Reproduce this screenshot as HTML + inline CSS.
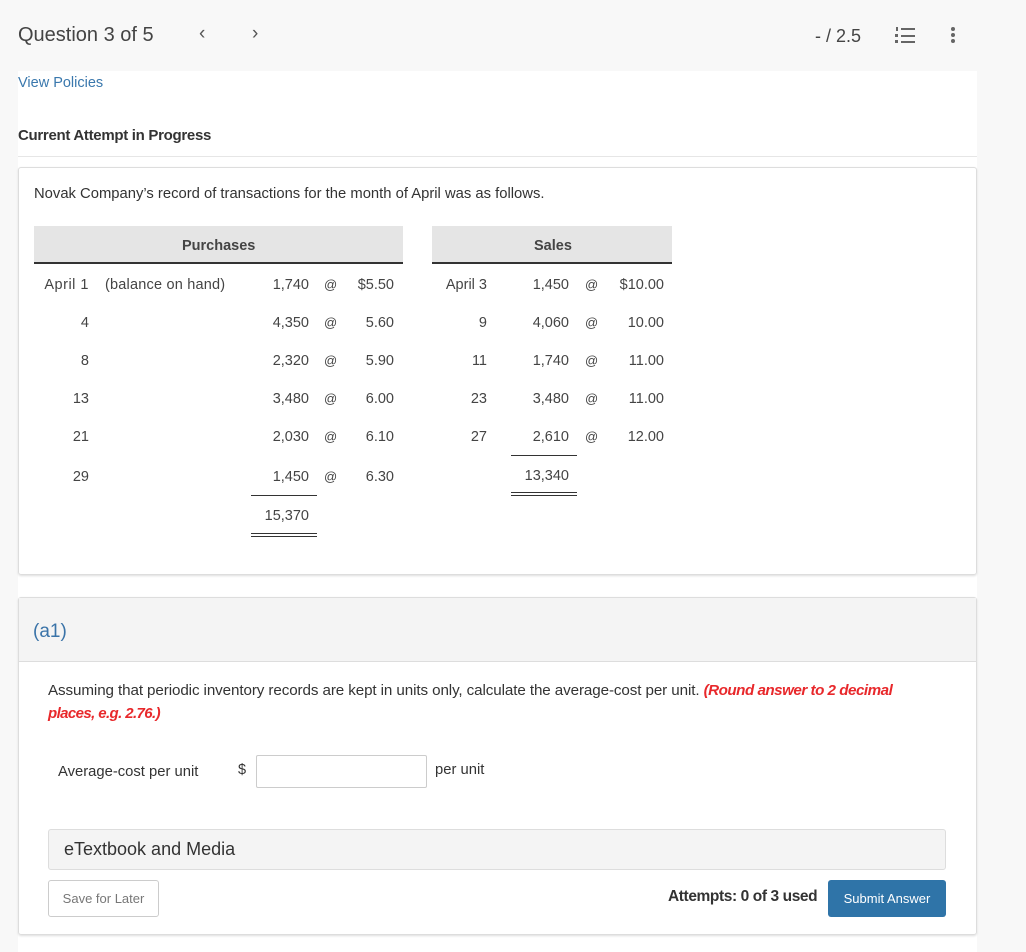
<!DOCTYPE html>
<html><head><meta charset="utf-8"><style>
*{margin:0;padding:0;box-sizing:border-box}
body{width:1026px;height:952px;background:#f8f8f8;font-family:"Liberation Sans",sans-serif;color:#333;position:relative;overflow:hidden}
.a{position:absolute;white-space:nowrap}
.r{position:absolute;white-space:nowrap;text-align:right}
.t{font-size:14.5px;color:#444}
.t>div{margin-top:1px}
</style></head><body>
<div class="a" style="left:18px;top:24px;font-size:20px;color:#444">Question 3 of 5</div>
<div class="a" style="left:199px;top:23px;font-size:19px;color:#555">&#8249;</div>
<div class="a" style="left:252px;top:23px;font-size:19px;color:#555">&#8250;</div>
<div class="a" style="left:815px;top:26px;font-size:18px;color:#444">- / 2.5</div>
<svg class="a" style="left:895px;top:26px" width="22" height="20"><g fill="#666"><rect x="1" y="1" width="2" height="4"/><rect x="0" y="8" width="3" height="3"/><rect x="0" y="14" width="3" height="3"/><rect x="6" y="2" width="14" height="2"/><rect x="6" y="9" width="14" height="2"/><rect x="6" y="15" width="14" height="2"/></g></svg>
<svg class="a" style="left:950px;top:26px" width="6" height="20"><g fill="#666"><circle cx="3" cy="3" r="2"/><circle cx="3" cy="9" r="2"/><circle cx="3" cy="15" r="2"/></g></svg>

<div class="a" style="left:18px;top:71px;width:959px;height:881px;background:#fff"></div>
<div class="a" style="left:18px;top:75px;font-size:14.5px;color:#3a78ad">View Policies</div>
<div class="a" style="left:18px;top:127px;font-size:15px;font-weight:bold;color:#333;letter-spacing:-0.3px">Current Attempt in Progress</div>
<div class="a" style="left:18px;top:156px;width:959px;height:1px;background:#e6e6e6"></div>

<div class="a" style="left:18px;top:167px;width:959px;height:408px;border:1px solid #ddd;border-radius:3px;box-shadow:0 1px 2px #ddd"></div>
<div class="a" style="left:34px;top:186px;font-size:14.8px;color:#333">Novak Company’s record of transactions for the month of April was as follows.</div>

<div class="a" style="left:34px;top:226px;width:369px;height:38px;background:#e5e5e5;border-bottom:2px solid #333"></div>
<div class="a" style="left:432px;top:226px;width:240px;height:38px;background:#e5e5e5;border-bottom:2px solid #333"></div>
<div class="a" style="left:182px;top:238px;font-size:14.5px;font-weight:bold;color:#444">Purchases</div>
<div class="a" style="left:534px;top:238px;font-size:14.5px;font-weight:bold;color:#444">Sales</div>

<div class="t">
<div class="r" style="left:20px;width:69px;top:276px;letter-spacing:0.5px">April 1</div>
<div class="a" style="left:105px;top:276px;letter-spacing:0.2px">(balance on hand)</div>
<div class="r" style="left:20px;width:69px;top:314px">4</div>
<div class="r" style="left:20px;width:69px;top:352px">8</div>
<div class="r" style="left:20px;width:69px;top:390px">13</div>
<div class="r" style="left:20px;width:69px;top:428px">21</div>
<div class="r" style="left:20px;width:69px;top:468px">29</div>

<div class="r" style="left:240px;width:69px;top:276px">1,740</div>
<div class="r" style="left:240px;width:69px;top:314px">4,350</div>
<div class="r" style="left:240px;width:69px;top:352px">2,320</div>
<div class="r" style="left:240px;width:69px;top:390px">3,480</div>
<div class="r" style="left:240px;width:69px;top:428px">2,030</div>
<div class="r" style="left:240px;width:69px;top:468px">1,450</div>
<div class="r" style="left:240px;width:69px;top:507px">15,370</div>

<div class="a" style="left:324px;top:276px;font-size:13px">@</div>
<div class="a" style="left:324px;top:314px;font-size:13px">@</div>
<div class="a" style="left:324px;top:352px;font-size:13px">@</div>
<div class="a" style="left:324px;top:390px;font-size:13px">@</div>
<div class="a" style="left:324px;top:428px;font-size:13px">@</div>
<div class="a" style="left:324px;top:468px;font-size:13px">@</div>

<div class="r" style="left:334px;width:60px;top:276px">$5.50</div>
<div class="r" style="left:334px;width:60px;top:314px">5.60</div>
<div class="r" style="left:334px;width:60px;top:352px">5.90</div>
<div class="r" style="left:334px;width:60px;top:390px">6.00</div>
<div class="r" style="left:334px;width:60px;top:428px">6.10</div>
<div class="r" style="left:334px;width:60px;top:468px">6.30</div>

<div class="r" style="left:420px;width:67px;top:276px">April 3</div>
<div class="r" style="left:420px;width:67px;top:314px">9</div>
<div class="r" style="left:420px;width:67px;top:352px">11</div>
<div class="r" style="left:420px;width:67px;top:390px">23</div>
<div class="r" style="left:420px;width:67px;top:428px">27</div>

<div class="r" style="left:500px;width:69px;top:276px">1,450</div>
<div class="r" style="left:500px;width:69px;top:314px">4,060</div>
<div class="r" style="left:500px;width:69px;top:352px">1,740</div>
<div class="r" style="left:500px;width:69px;top:390px">3,480</div>
<div class="r" style="left:500px;width:69px;top:428px">2,610</div>
<div class="r" style="left:500px;width:69px;top:467px">13,340</div>

<div class="a" style="left:585px;top:276px;font-size:13px">@</div>
<div class="a" style="left:585px;top:314px;font-size:13px">@</div>
<div class="a" style="left:585px;top:352px;font-size:13px">@</div>
<div class="a" style="left:585px;top:390px;font-size:13px">@</div>
<div class="a" style="left:585px;top:428px;font-size:13px">@</div>

<div class="r" style="left:600px;width:64px;top:276px">$10.00</div>
<div class="r" style="left:600px;width:64px;top:314px">10.00</div>
<div class="r" style="left:600px;width:64px;top:352px">11.00</div>
<div class="r" style="left:600px;width:64px;top:390px">11.00</div>
<div class="r" style="left:600px;width:64px;top:428px">12.00</div>
</div>
<div class="a" style="left:251px;top:495px;width:66px;height:1px;background:#333"></div>
<div class="a" style="left:251px;top:533px;width:66px;height:4px;border-top:1px solid #333;border-bottom:1px solid #333"></div>
<div class="a" style="left:511px;top:455px;width:66px;height:1px;background:#333"></div>
<div class="a" style="left:511px;top:492px;width:66px;height:4px;border-top:1px solid #333;border-bottom:1px solid #333"></div>

<div class="a" style="left:18px;top:597px;width:959px;height:338px;border:1px solid #ddd;border-radius:3px;box-shadow:0 1px 2px #ddd"></div>
<div class="a" style="left:19px;top:598px;width:957px;height:64px;background:#f4f4f4;border-bottom:1px solid #ddd"></div>
<div class="a" style="left:33px;top:621px;font-size:19px;color:#3a73a8">(a1)</div>
<div class="a" style="left:48px;top:682px;font-size:15.2px;color:#333;letter-spacing:-0.1px">Assuming that periodic inventory records are kept in units only, calculate the average-cost per unit. <b style="color:#e8282b;font-style:italic;letter-spacing:-0.5px">(Round answer to 2 decimal</b></div>
<div class="a" style="left:48px;top:705px;font-size:15px;color:#e8282b;font-style:italic;font-weight:bold;letter-spacing:-0.6px">places, e.g. 2.76.)</div>
<div class="a" style="left:58px;top:764px;font-size:14.8px;color:#333">Average-cost per unit</div>
<div class="a" style="left:238px;top:762px;font-size:14.5px;color:#333">$</div>
<div class="a" style="left:256px;top:755px;width:171px;height:33px;border:1px solid #ccc;border-radius:2px;background:#fff"></div>
<div class="a" style="left:435px;top:762px;font-size:14.8px;color:#333">per unit</div>

<div class="a" style="left:48px;top:829px;width:898px;height:41px;background:#f4f4f4;border:1px solid #ddd;border-radius:3px"></div>
<div class="a" style="left:64px;top:839px;font-size:18px;color:#333">eTextbook and Media</div>
<div class="a" style="left:48px;top:880px;width:111px;height:37px;border:1px solid #ccc;border-radius:3px;background:#fff;font-size:13px;color:#777;text-align:center;line-height:35px">Save for Later</div>
<div class="a" style="left:668px;top:888px;font-size:15.5px;font-weight:bold;color:#333;letter-spacing:-0.4px">Attempts: 0 of 3 used</div>
<div class="a" style="left:828px;top:880px;width:118px;height:37px;border-radius:3px;background:#2f74a8;font-size:13px;color:#fff;text-align:center;line-height:37px">Submit Answer</div>
</body></html>
